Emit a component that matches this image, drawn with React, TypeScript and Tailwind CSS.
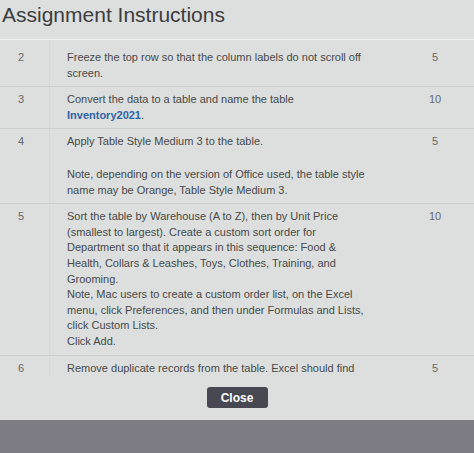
import React from "react";

type Row = {
  num: number;
  points: number;
  body: React.ReactNode;
  first?: boolean;
};

const rows: Row[] = [
  {
    num: 2,
    points: 5,
    first: true,
    body: <p>Freeze the top row so that the column labels do not scroll off screen.</p>,
  },
  {
    num: 3,
    points: 10,
    body: (
      <p>
        Convert the data to a table and name the table{" "}
        <span className="font-bold text-[#2f63a8]">Inventory2021</span>.
      </p>
    ),
  },
  {
    num: 4,
    points: 5,
    body: (
      <>
        <p>Apply Table Style Medium 3 to the table.</p>
        <p className="mt-[17px]">
          Note, depending on the version of Office used, the table style name may be Orange, Table Style
          Medium 3.
        </p>
      </>
    ),
  },
  {
    num: 5,
    points: 10,
    body: (
      <>
        <p>
          Sort the table by Warehouse (A to Z), then by Unit Price (smallest to largest). Create a custom sort
          order for Department so that it appears in this sequence: Food &amp; Health, Collars &amp; Leashes,
          Toys, Clothes, Training, and Grooming.
        </p>
        <p>
          Note, Mac users to create a custom order list, on the Excel menu, click Preferences, and then under
          Formulas and Lists, click Custom Lists.
        </p>
        <p>Click Add.</p>
      </>
    ),
  },
  {
    num: 6,
    points: 5,
    body: <p>Remove duplicate records from the table. Excel should find</p>,
  },
];

export default function App() {
  return (
    <div
      className="w-[474px] h-[453px] bg-[#7d7c84] overflow-hidden"
      style={{ fontFamily: '"Liberation Sans", Arial, sans-serif' }}
    >
      <div className="h-[420px] bg-[#dcdfdd] flex flex-col">
        <div className="h-[39px] pl-[2px] pt-[1px] text-[21px] leading-[28px] text-[#3c3d3e]">
          Assignment Instructions
        </div>

        <div className="h-[337px] overflow-hidden border-t border-[#eef0ef]">
          {rows.map((r) => (
            <div
              key={r.num}
              className="grid grid-cols-[50px_350px_1fr] border-b border-[#cbcecd] text-[11px] leading-[15.6px] text-[#47494a]"
            >
              <div
                className={`border-r border-[#d5d8d7] pl-[18px] pb-[5px] text-[#66686a] ${
                  r.first ? "pt-[10px]" : "pt-[5px]"
                }`}
              >
                {r.num}
              </div>
              <div className={`pl-[17px] pb-[5px] ${r.first ? "pt-[10px]" : "pt-[5px]"}`}>
                <div className="w-[301px]">{r.body}</div>
              </div>
              <div
                className={`text-center pr-[4px] text-[#66686a] ${r.first ? "pt-[10px]" : "pt-[5px]"}`}
              >
                {r.points}
              </div>
            </div>
          ))}
        </div>

        <div className="flex justify-center pt-[11px]">
          <button className="w-[61px] h-[21px] rounded-[3px] bg-[#474852] text-white text-[12px] font-bold">
            Close
          </button>
        </div>
      </div>
    </div>
  );
}
